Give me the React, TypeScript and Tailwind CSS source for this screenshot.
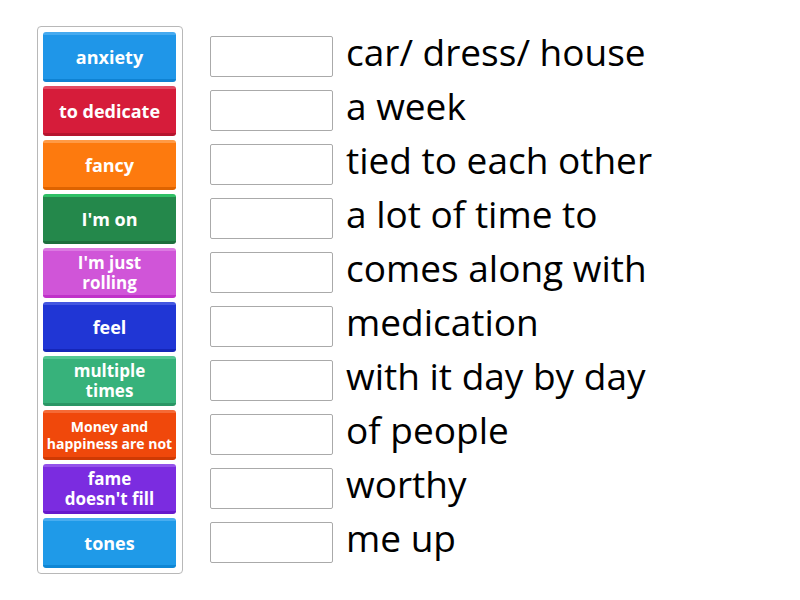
const tiles = [
  { lines: ["anxiety"], bg: "bg-[#1f96e8]", top: "border-t-[#45aaf0]", bottom: "border-b-[#0f82d2]", size: "text-[18px] leading-[20px]" },
  { lines: ["to dedicate"], bg: "bg-[#d61c3a]", top: "border-t-[#e24a62]", bottom: "border-b-[#b6142e]", size: "text-[18px] leading-[20px]" },
  { lines: ["fancy"], bg: "bg-[#fd7a0e]", top: "border-t-[#ff9a45]", bottom: "border-b-[#de6300]", size: "text-[18px] leading-[20px]" },
  { lines: ["I'm on"], bg: "bg-[#24884b]", top: "border-t-[#2fc065]", bottom: "border-b-[#1d6e3c]", size: "text-[18px] leading-[20px]" },
  { lines: ["I'm just", "rolling"], bg: "bg-[#d055d8]", top: "border-t-[#dc7ae2]", bottom: "border-b-[#c031c9]", size: "text-[17px] leading-[20px]" },
  { lines: ["feel"], bg: "bg-[#2036d5]", top: "border-t-[#4457e0]", bottom: "border-b-[#1526b8]", size: "text-[18px] leading-[20px]" },
  { lines: ["multiple", "times"], bg: "bg-[#37b27b]", top: "border-t-[#55c793]", bottom: "border-b-[#2a9665]", size: "text-[17px] leading-[20px]" },
  { lines: ["Money and", "happiness are not"], bg: "bg-[#f0480b]", top: "border-t-[#f56a36]", bottom: "border-b-[#cf3a04]", size: "text-[14px] leading-[17px]" },
  { lines: ["fame", "doesn't fill"], bg: "bg-[#7b2ce0]", top: "border-t-[#9553ea]", bottom: "border-b-[#6618cc]", size: "text-[17px] leading-[20px]" },
  { lines: ["tones"], bg: "bg-[#1f9ae8]", top: "border-t-[#48adf0]", bottom: "border-b-[#0f86d4]", size: "text-[18px] leading-[20px]" },
];

const answers = [
  "car/ dress/ house",
  "a week",
  "tied to each other",
  "a lot of time to",
  "comes along with",
  "medication",
  "with it day by day",
  "of people",
  "worthy",
  "me up",
];

export default function App() {
  return (
    <div className="min-h-[600px] w-[800px] bg-white pl-[37px] pt-[26px]" style={{ fontFamily: '"Open Sans", sans-serif' }}>
      <div className="flex items-start">
        <div className="flex flex-col gap-[4px] rounded-[4px] border border-[#b8b8b8] pb-[5px] pl-[5px] pr-[6px] pt-[5px]">
          {tiles.map((t) => (
            <div
              key={t.lines.join(" ")}
              className={`flex h-[50px] w-[133px] flex-col items-center justify-center rounded-[3px] border-t-[3px] border-b-[3px] text-center font-bold text-white ${t.bg} ${t.top} ${t.bottom} ${t.size}`}
            >
              {t.lines.map((l) => (
                <span key={l} className="whitespace-nowrap">{l}</span>
              ))}
            </div>
          ))}
        </div>
        <div className="ml-[27px] flex flex-col gap-[4px] pt-[6px]">
          {answers.map((a) => (
            <div key={a} className="flex h-[50px] items-start">
              <div className="mt-[4px] h-[41px] w-[123px] rounded-[2px] border border-[#aaaaaa] bg-white" />
              <span className="ml-[13px] mt-[1px] whitespace-nowrap text-[37px] leading-none text-black">{a}</span>
            </div>
          ))}
        </div>
      </div>
    </div>
  );
}
